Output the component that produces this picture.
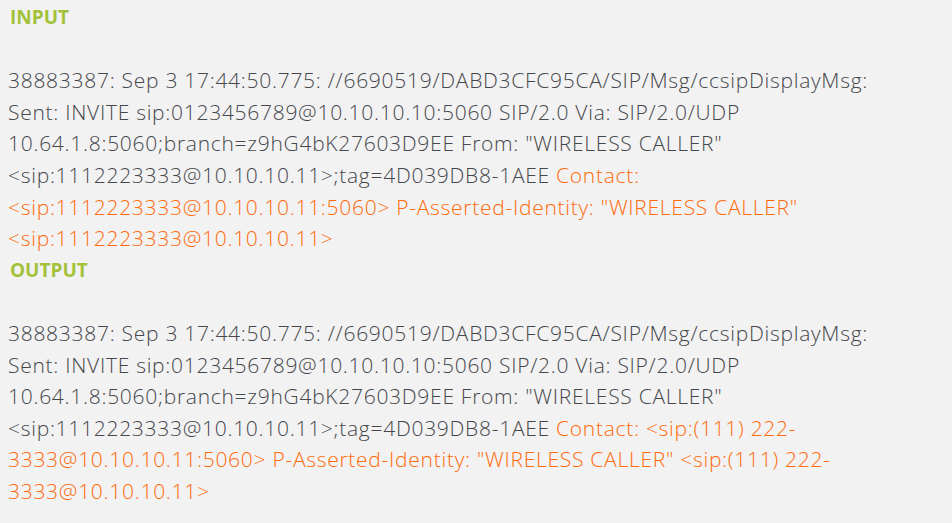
export default function App() {
  const gray = "text-[#45474b]";
  const orange = "text-[#ff6a0a]";
  return (
    <div className="min-h-screen bg-[#f2f2f2] pt-[2px] pl-[8px] text-[21px] leading-[31.6px] font-['Open_Sans',sans-serif] font-light tracking-[0.72px]">
      <div className="pl-[2px] text-[19px] tracking-normal font-bold text-[#a3c23a]">INPUT</div>
      <div className="h-[31.6px]" />
      <div className={gray}>
        <div className="whitespace-nowrap">38883387: Sep 3 17:44:50.775: //6690519/DABD3CFC95CA/SIP/Msg/ccsipDisplayMsg:</div>
        <div className="whitespace-nowrap">Sent: INVITE sip:0123456789@10.10.10.10:5060 SIP/2.0 Via: SIP/2.0/UDP</div>
        <div className="whitespace-nowrap">10.64.1.8:5060;branch=z9hG4bK27603D9EE From: "WIRELESS CALLER"</div>
        <div className="whitespace-nowrap">
          &lt;sip:1112223333@10.10.10.11&gt;;tag=4D039DB8-1AEE <span className={orange}>Contact:</span>
        </div>
        <div className={`whitespace-nowrap ${orange}`}>&lt;sip:1112223333@10.10.10.11:5060&gt; P-Asserted-Identity: "WIRELESS CALLER"</div>
        <div className={`whitespace-nowrap ${orange}`}>&lt;sip:1112223333@10.10.10.11&gt;</div>
      </div>
      <div className="pl-[2px] text-[19px] tracking-normal font-bold text-[#a3c23a]">OUTPUT</div>
      <div className="h-[31.6px]" />
      <div className={gray}>
        <div className="whitespace-nowrap">38883387: Sep 3 17:44:50.775: //6690519/DABD3CFC95CA/SIP/Msg/ccsipDisplayMsg:</div>
        <div className="whitespace-nowrap">Sent: INVITE sip:0123456789@10.10.10.10:5060 SIP/2.0 Via: SIP/2.0/UDP</div>
        <div className="whitespace-nowrap">10.64.1.8:5060;branch=z9hG4bK27603D9EE From: "WIRELESS CALLER"</div>
        <div className="whitespace-nowrap">
          &lt;sip:1112223333@10.10.10.11&gt;;tag=4D039DB8-1AEE <span className={orange}>Contact: &lt;sip:(111) 222-</span>
        </div>
        <div className={`whitespace-nowrap ${orange}`}>3333@10.10.10.11:5060&gt; P-Asserted-Identity: "WIRELESS CALLER" &lt;sip:(111) 222-</div>
        <div className={`whitespace-nowrap ${orange}`}>3333@10.10.10.11&gt;</div>
      </div>
    </div>
  );
}
